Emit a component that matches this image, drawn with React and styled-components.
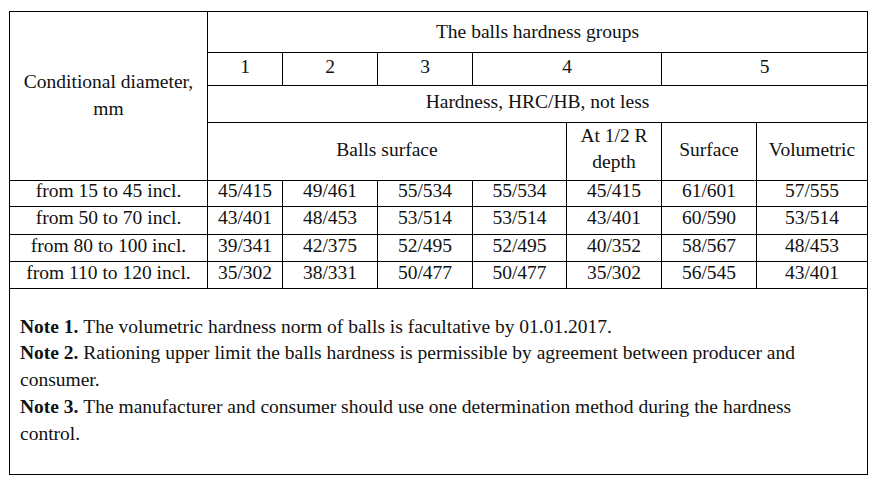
import React from "react";
import styled, { createGlobalStyle } from "styled-components";

const Global = createGlobalStyle`
  html, body { margin: 0; padding: 0; background: #ffffff; }
  body { font-family: "Liberation Serif", "Times New Roman", serif; color: #111; }
`;

const Page = styled.div`
  padding: 11px 0 0 9px;
`;

const Table = styled.table`
  border-collapse: collapse;
  table-layout: fixed;
  width: 858px;
  font-family: "Liberation Serif", "Times New Roman", serif;
  font-size: 19.5px;
  color: #111;
`;

const Row = styled.tr`
  height: ${(p) => p.$h}px;
`;

const Cell = styled.td`
  border: 1px solid #000;
  padding: 0 4px ${(p) => (p.$pb == null ? 4 : p.$pb)}px;
  text-align: center;
  vertical-align: middle;
  line-height: ${(p) => p.$lh || 20}px;
  white-space: nowrap;
`;

const NoteCell = styled.td`
  border: 1px solid #000;
  padding: 0 12px 2px 10px;
  text-align: left;
  vertical-align: middle;
  font-size: 19.5px;
  line-height: 26.7px;
`;

const NoteLine = styled.p`
  margin: 0;
`;

const NoteLabel = styled.b`
  font-weight: bold;
`;

const widths = [198, 75, 95, 95, 94, 95, 95, 111];

const data = [
  ["from 15 to 45 incl.", "45/415", "49/461", "55/534", "55/534", "45/415", "61/601", "57/555"],
  ["from 50 to 70 incl.", "43/401", "48/453", "53/514", "53/514", "43/401", "60/590", "53/514"],
  ["from 80 to 100 incl.", "39/341", "42/375", "52/495", "52/495", "40/352", "58/567", "48/453"],
  ["from 110 to 120 incl.", "35/302", "38/331", "50/477", "50/477", "35/302", "56/545", "43/401"],
];
const rowHeights = [26, 28, 27, 27];

const notes = [
  ["Note 1. ", "The volumetric hardness norm of balls is facultative by 01.01.2017."],
  ["Note 2. ", "Rationing upper limit the balls hardness is permissible by agreement between producer and consumer."],
  ["Note 3. ", "The manufacturer and consumer should use one determination method during the hardness control."],
];

export default function App() {
  return (
    <>
      <Global />
      <Page>
        <Table>
          <colgroup>
            {widths.map((w, i) => (
              <col key={i} style={{ width: w }} />
            ))}
          </colgroup>
          <tbody>
            <Row $h={41}>
              <Cell rowSpan={4} $lh={27} $pb={2}>
                Conditional diameter,
                <br />
                mm
              </Cell>
              <Cell colSpan={7} $pb={1}>The balls hardness groups</Cell>
            </Row>
            <Row $h={33}>
              <Cell>1</Cell>
              <Cell>2</Cell>
              <Cell>3</Cell>
              <Cell colSpan={2}>4</Cell>
              <Cell colSpan={2}>5</Cell>
            </Row>
            <Row $h={37}>
              <Cell colSpan={7}>Hardness, HRC/HB, not less</Cell>
            </Row>
            <Row $h={55}>
              <Cell colSpan={4}>Balls surface</Cell>
              <Cell $lh={26} $pb={5}>
                At 1/2 R
                <br />
                depth
              </Cell>
              <Cell>Surface</Cell>
              <Cell>Volumetric</Cell>
            </Row>
            {data.map((r, i) => (
              <Row key={i} $h={rowHeights[i]}>
                {r.map((c, j) => (
                  <Cell key={j} $pb={5}>{c}</Cell>
                ))}
              </Row>
            ))}
            <Row $h={186}>
              <NoteCell colSpan={8}>
                {notes.map(([b, t], i) => (
                  <NoteLine key={i}>
                    <NoteLabel>{b}</NoteLabel>
                    {t}
                  </NoteLine>
                ))}
              </NoteCell>
            </Row>
          </tbody>
        </Table>
      </Page>
    </>
  );
}
